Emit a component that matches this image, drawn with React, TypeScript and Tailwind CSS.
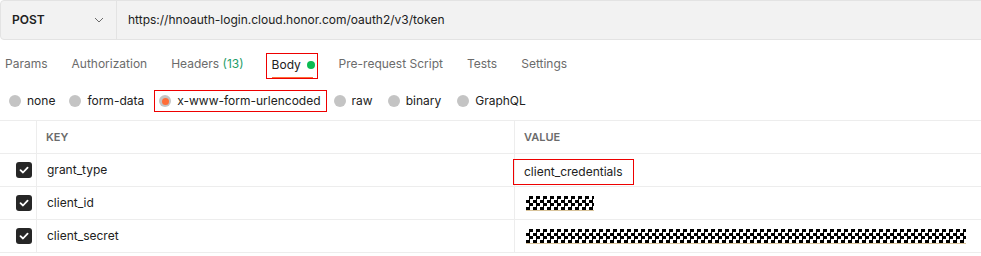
import React from "react";

const Radio: React.FC<{ label: string; active?: boolean }> = ({ label, active }) => (
  <div className="flex items-center">
    <span className="w-[12px] h-[12px] rounded-full flex items-center justify-center bg-[#c4c4c4]">
      {active && <span className="w-[7px] h-[7px] rounded-full bg-[#ff6c37]" />}
    </span>
    <span className="ml-[6px] text-[12px] text-[#212121]">{label}</span>
  </div>
);

const Check: React.FC = () => (
  <span className="w-[16px] h-[16px] rounded-[3px] bg-[#262626] flex items-center justify-center">
    <svg width="10" height="10" viewBox="0 0 10 10" fill="none">
      <path d="M1.5 5.2 L4 7.5 L8.6 2.6" stroke="#fff" strokeWidth="1.8" strokeLinecap="round" strokeLinejoin="round" />
    </svg>
  </span>
);

const Masked: React.FC<{ width: string }> = ({ width }) => (
  <div
    className={`${width} h-[15px] bg-[repeating-conic-gradient(#000_0%_25%,#fff_0%_50%)] bg-[length:7px_7px] border-b border-[#d8c39a]`}
  />
);

const Row: React.FC<{ name: string; children: React.ReactNode }> = ({ name, children }) => (
  <div className="flex h-[33px] border-b border-[#ededed]">
    <div className="w-[37px] border-r border-[#ededed] flex items-center pl-[16px]"><Check /></div>
    <div className="w-[478px] border-r border-[#ededed] flex items-center pl-[10px]">{name}</div>
    <div className="flex-1 flex items-center">{children}</div>
  </div>
);

export default function App() {
  return (
    <div className="w-[981px] h-[256px] overflow-hidden bg-white font-['Inter','Noto_Sans',sans-serif] text-[#212121]">
      {/* request bar */}
      <div className="flex h-[40px] w-[1000px] bg-[#f2f2f2] border border-[#e3e3e3] rounded-l-[4px]">
        <div className="w-[116px] flex items-center justify-between pl-[11px] pr-[12px] border-r border-[#e3e3e3]">
          <span className="text-[12px] font-semibold text-[#212121]">POST</span>
          <svg width="10" height="6" viewBox="0 0 10 6" fill="none">
            <path d="M1 1 L5 5 L9 1" stroke="#6b6b6b" strokeWidth="1" />
          </svg>
        </div>
        <div className="flex items-center pl-[11px] text-[12px] text-[#212121]">
          https://hnoauth-login.cloud.honor.com/oauth2/v3/token
        </div>
      </div>

      {/* tabs */}
      <div className="flex items-center h-[46px] text-[12px] text-[#6b6b6b]">
        <span className="ml-[5px] mt-[1px]">Params</span>
        <span className="ml-[24px] mt-[1px]">Authorization</span>
        <span className="ml-[24px] mt-[1px]">
          Headers <span className="text-[#1f9d6a]">(13)</span>
        </span>
        <div className="ml-[22px] mt-[6px] w-[52px] h-[26px] border-[1.5px] border-[#e00] flex flex-col pl-[5px] pt-[2px]">
          <div className="flex items-center gap-[6px] text-[#212121]">
            <span>Body</span>
            <span className="w-[8px] h-[8px] rounded-full bg-[#0cbb52]" />
          </div>
          <div className="mt-[3px] w-[41px] h-[2px] bg-[#ff6c37]" />
        </div>
        <span className="ml-[21px] mt-[1px]">Pre-request Script</span>
        <span className="ml-[24px] mt-[1px]">Tests</span>
        <span className="ml-[24px] mt-[1px]">Settings</span>
      </div>

      {/* body types */}
      <div className="flex items-center h-[30px] pl-[9px]">
        <Radio label="none" />
        <div className="ml-[14px]"><Radio label="form-data" /></div>
        <div className="ml-[10px] border-[1.5px] border-[#e00] h-[22px] pl-[4px] pr-[5px] flex items-center">
          <Radio label="x-www-form-urlencoded" active />
        </div>
        <div className="ml-[7px]"><Radio label="raw" /></div>
        <div className="ml-[15px]"><Radio label="binary" /></div>
        <div className="ml-[16px]"><Radio label="GraphQL" /></div>
      </div>

      {/* table */}
      <div className="mt-[4px] border-t border-[#ededed] text-[12px]">
        <div className="flex h-[33px] border-b border-[#ededed] text-[11px] font-semibold text-[#6b6b6b]">
          <div className="w-[37px] border-r border-[#ededed]" />
          <div className="w-[478px] border-r border-[#ededed] flex items-center pl-[9px]">KEY</div>
          <div className="flex-1 flex items-center pl-[9px]">VALUE</div>
        </div>
        <Row name="grant_type">
          <div className="-ml-[2px] mt-[3px] h-[26px] w-[121px] border-[1.5px] border-[#e00] flex items-center pl-[10px]">
            client_credentials
          </div>
        </Row>
        <Row name="client_id">
          <div className="pl-[11px]"><Masked width="w-[68px]" /></div>
        </Row>
        <Row name="client_secret">
          <div className="pl-[11px]"><Masked width="w-[440px]" /></div>
        </Row>
      </div>
    </div>
  );
}
